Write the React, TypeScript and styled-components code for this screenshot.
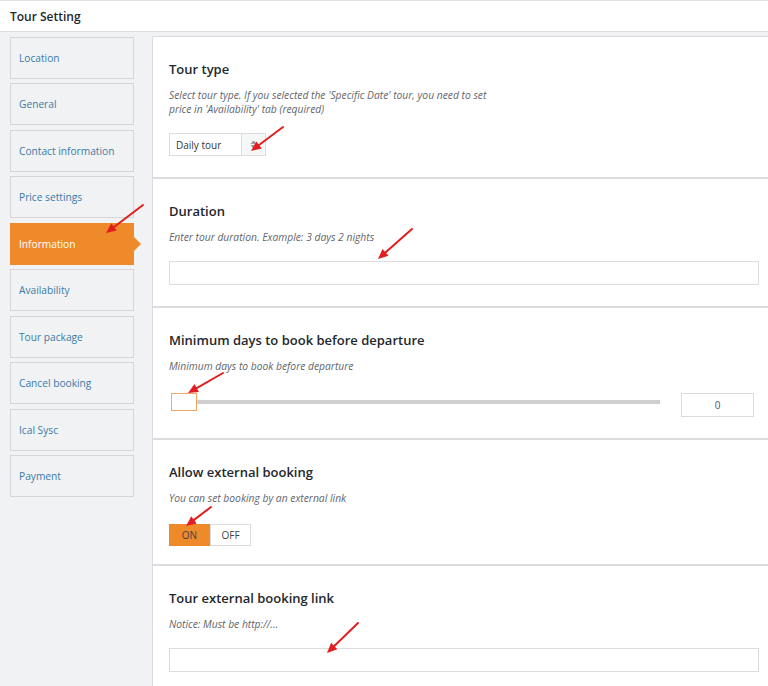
import React from "react";
import styled, {createGlobalStyle} from "styled-components";

const orange = "#ef8a2a";
const line = "#dcdcde";
const ink = "#23282d";

const GlobalStyle = createGlobalStyle`
  body {
    margin: 0;
    background: #f1f2f4;
    font-family: "Open Sans", "Noto Sans", sans-serif;
    color: ${ink};
  }
`;

type Tab = {
  label: string
  active?: boolean
}

const tabs: Tab[] = [
  {label: "Location"},
  {label: "General"},
  {label: "Contact information"},
  {label: "Price settings"},
  {label: "Information", active: true},
  {label: "Availability"},
  {label: "Tour package"},
  {label: "Cancel booking"},
  {label: "Ical Sysc"},
  {label: "Payment"},
];

// red pointer arrows laid over the form: [fromX, fromY, tipX, tipY]
const pointers = [
  [283, 127, 251, 151],
  [143, 205, 106, 233],
  [412, 229, 378, 259],
  [223, 373, 188, 393],
  [211, 507, 186, 526],
  [358, 623, 327, 653],
];

function Pointer({x1, y1, x2, y2}: {x1: number, y1: number, x2: number, y2: number}) {
  const angle = Math.atan2(y2 - y1, x2 - x1);
  const len = 11;
  const spread = 0.42;
  const ax = x2 - len * Math.cos(angle - spread);
  const ay = y2 - len * Math.sin(angle - spread);
  const bx = x2 - len * Math.cos(angle + spread);
  const by = y2 - len * Math.sin(angle + spread);
  const mx = x2 - 8 * Math.cos(angle);
  const my = y2 - 8 * Math.sin(angle);
  return <g>
    <line x1={x1} y1={y1} x2={mx} y2={my} stroke="#e31e1e" strokeWidth={2} strokeLinecap="round" />
    <polygon points={`${x2},${y2} ${ax},${ay} ${bx},${by}`} fill="#e31e1e" />
  </g>;
}

export default function App() {
  return <Page>
    <GlobalStyle />
    <Header>Tour Setting</Header>
    <Body>
      <Sidebar>
        {tabs.map(tab => <TabItem key={tab.label} active={tab.active}>{tab.label}</TabItem>)}
      </Sidebar>
      <Panel>
        <Section>
          <Title>Tour type</Title>
          <Hint>Select tour type. If you selected the 'Specific Date' tour, you need to set<br />price in 'Availability' tab (required)</Hint>
          <Select>
            <SelectValue>Daily tour</SelectValue>
            <SelectArrow>
              <svg width="7" height="9" viewBox="0 0 7 9">
                <polygon points="3.5,0.5 6.5,3.8 0.5,3.8" fill="#8c8f94" />
                <polygon points="3.5,8.5 6.5,5.2 0.5,5.2" fill="#8c8f94" />
              </svg>
            </SelectArrow>
          </Select>
        </Section>
        <Section>
          <Title>Duration</Title>
          <Hint>Enter tour duration. Example: 3 days 2 nights</Hint>
          <TextInput />
        </Section>
        <Section>
          <Title>Minimum days to book before departure</Title>
          <Hint>Minimum days to book before departure</Hint>
          <SliderRow>
            <Slider>
              <Track />
              <Handle />
            </Slider>
            <NumberBox>0</NumberBox>
          </SliderRow>
        </Section>
        <Section>
          <Title>Allow external booking</Title>
          <Hint>You can set booking by an external link</Hint>
          <Toggle>
            <ToggleOption on>ON</ToggleOption>
            <ToggleOption>OFF</ToggleOption>
          </Toggle>
        </Section>
        <Section last>
          <Title>Tour external booking link</Title>
          <Hint>Notice: Must be http://...</Hint>
          <TextInput />
        </Section>
      </Panel>
    </Body>
    <Overlay width="768" height="686" viewBox="0 0 768 686">
      {pointers.map(([x1, y1, x2, y2], i) => <Pointer key={i} x1={x1} y1={y1} x2={x2} y2={y2} />)}
    </Overlay>
  </Page>;
}

const Page = styled.div`
  position: relative;
  width: 768px;
  height: 686px;
  overflow: hidden;
`;

const Header = styled.div`
  height: 30px;
  background: white;
  border-top: 1px solid #e2e2e2;
  border-bottom: 1px solid ${line};
  padding: 0 10px;
  display: flex;
  align-items: center;
  font-size: 12px;
  font-weight: 600;
`;

const Body = styled.div`
  display: flex;
  padding-top: 4px;
`;

const Sidebar = styled.div`
  width: 152px;
  flex-shrink: 0;
  box-sizing: border-box;
  padding: 1px 18px 0 10px;
  display: flex;
  flex-direction: column;
  gap: 4.45px;
`;

const TabItem = styled.div<{active?: boolean}>`
  position: relative;
  height: 42px;
  box-sizing: border-box;
  display: flex;
  align-items: center;
  padding-left: 8px;
  font-size: 10.2px;
  border: 1px solid ${props => props.active ? orange : "#d6d6d8"};
  background: ${props => props.active ? orange : "#f1f2f4"};
  color: ${props => props.active ? "white" : "#3b7aa6"};

  &::after {
    content: "";
    display: ${props => props.active ? "block" : "none"};
    position: absolute;
    right: -8px;
    top: 50%;
    margin-top: -7px;
    border-left: 7px solid ${orange};
    border-top: 7px solid transparent;
    border-bottom: 7px solid transparent;
  }
`;

const Panel = styled.div`
  flex: 1;
  background: white;
  border: 1px solid ${line};
  border-right: none;
  min-height: 660px;
`;

const Section = styled.div<{last?: boolean}>`
  padding: 22px 9px 21px 16px;
  border-bottom: ${props => props.last ? "none" : "2px solid #dcdcde"};
`;

const Title = styled.div`
  font-size: 13px;
  font-weight: 600;
  line-height: 20px;
  margin-bottom: 9px;
`;

const Hint = styled.div`
  font-size: 10.3px;
  font-style: italic;
  line-height: 14px;
  color: #5f666d;
  margin-bottom: 17px;
`;

const Select = styled.div`
  width: 97px;
  height: 23px;
  box-sizing: border-box;
  border: 1px solid ${line};
  display: flex;
`;

const SelectValue = styled.div`
  flex: 1;
  display: flex;
  align-items: center;
  padding-left: 6px;
  font-size: 10px;
  color: #32373c;
`;

const SelectArrow = styled.div`
  width: 23px;
  border-left: 1px solid ${line};
  background: #f6f7f7;
  display: flex;
  align-items: center;
  justify-content: center;
`;

const TextInput = styled.div`
  height: 24px;
  box-sizing: border-box;
  border: 1px solid ${line};
`;

const SliderRow = styled.div`
  display: flex;
  align-items: flex-start;
  gap: 21px;
  margin-top: 20px;
`;

const Slider = styled.div`
  position: relative;
  width: 489px;
  height: 18px;
  margin-left: 2px;
`;

const Track = styled.div`
  position: absolute;
  left: 0;
  right: 0;
  top: 7px;
  height: 4px;
  background: #cfcfd1;
`;

const Handle = styled.div`
  position: absolute;
  left: 0;
  top: 0;
  width: 26px;
  height: 18px;
  box-sizing: border-box;
  border: 1px solid #f2a766;
  background: white;
`;

const NumberBox = styled.div`
  width: 73px;
  height: 24px;
  box-sizing: border-box;
  border: 1px solid ${line};
  display: flex;
  align-items: center;
  justify-content: center;
  font-size: 10px;
  color: #50575e;
`;

const Toggle = styled.div`
  display: flex;
  width: 82px;
  height: 22px;
  margin-top: 19px;
  margin-bottom: -3px;
`;

const ToggleOption = styled.div<{on?: boolean}>`
  flex: 1;
  box-sizing: border-box;
  display: flex;
  align-items: center;
  justify-content: center;
  font-size: 10px;
  color: #3c434a;
  background: ${props => props.on ? orange : "white"};
  border: 1px solid ${props => props.on ? orange : line};
`;

const Overlay = styled.svg`
  position: absolute;
  left: 0;
  top: 0;
  pointer-events: none;
`;
